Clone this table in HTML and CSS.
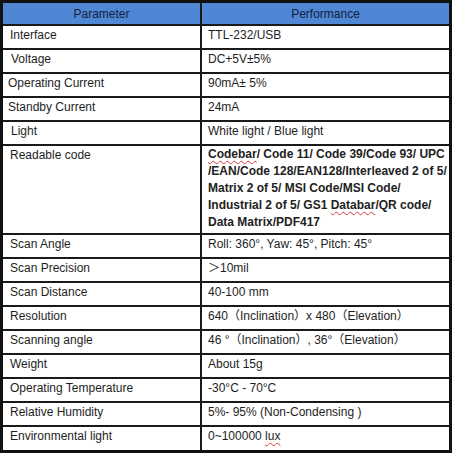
FILE: index.html
```html
<!DOCTYPE html>
<html lang="en">
<head>
<meta charset="utf-8">
<title>Specifications</title>
<link rel="stylesheet" href="styles.css">
</head>
<body>
<table class="spec">
  <colgroup><col class="col-param"><col class="col-perf"></colgroup>
  <thead>
    <tr class="head"><th>Parameter</th><th>Performance</th></tr>
  </thead>
  <tbody>
    <tr><td>Interface</td><td>TTL-232/USB</td></tr>
    <tr><td class="in-l">Voltage</td><td>DC+5V±5%</td></tr>
    <tr class="thick"><td class="in-s">Operating Current</td><td>90mA± 5%</td></tr>
    <tr class="thick"><td class="in-s">Standby Current</td><td>24mA</td></tr>
    <tr class="thick"><td class="in-l">Light</td><td>White light / Blue light</td></tr>
    <tr class="codes"><td>Readable code</td><td class="bold"><span class="spell">Codebar</span>/ Code 11/ Code 39/Code 93/ UPC<br>/EAN/Code 128/EAN128/Interleaved 2 of 5/<br>Matrix 2 of 5/ MSI Code/MSI Code/<br>Industrial 2 of 5/ GS1 <span class="spell">Databar</span>/QR code/<br>Data Matrix/PDF417</td></tr>
    <tr class="thick"><td>Scan Angle</td><td>Roll: 360°, Yaw: 45°, Pitch: 45°</td></tr>
    <tr class="thick"><td>Scan Precision</td><td>＞10mil</td></tr>
    <tr class="thick"><td>Scan Distance</td><td>40-100 mm</td></tr>
    <tr><td>Resolution</td><td>640（Inclination）x 480（Elevation）</td></tr>
    <tr class="thick"><td>Scanning angle</td><td>46 °（Inclination）, 36°（Elevation）</td></tr>
    <tr class="thick"><td>Weight</td><td>About 15g</td></tr>
    <tr><td>Operating Temperature</td><td>-30°C - 70°C</td></tr>
    <tr><td>Relative Humidity</td><td>5%- 95% (Non-Condensing )</td></tr>
    <tr class="last"><td>Environmental light</td><td>0~100000 <span class="spell">lux</span></td></tr>
  </tbody>
</table>
</body>
</html>
```

FILE: styles.css
```css
html, body {
  margin: 0;
  padding: 0;
  background: #ffffff;
}

.spec {
  width: 452px;
  border: 3px solid #111111;
  border-collapse: separate;
  border-spacing: 0;
  table-layout: fixed;
  font-family: "Liberation Sans", Arial, "Noto Sans CJK SC", sans-serif;
  font-size: 12px;
  color: #1e1e1e;
}

.col-param { width: 199px; }
.col-perf { width: 247px; }

.spec th,
.spec td {
  padding: 2px 0 0 6px;
  line-height: 14px;
  height: 20px;
  vertical-align: top;
  text-align: left;
  font-weight: normal;
  white-space: nowrap;
  border-bottom: 2px solid #1a1a1a;
}

.spec th:first-child,
.spec td:first-child {
  padding-left: 7px;
  border-right: 2px solid #1a1a1a;
}

.spec .head th {
  background: #4f87d5;
  color: #15213d;
  text-align: center;
  vertical-align: middle;
  padding: 0;
  height: 21px;
}

.spec .head th:first-child {
  padding: 0;
}

.spec td.in-s { padding-left: 5px; }
.spec td.in-l { padding-left: 8px; }

.spec .thick td { border-bottom-width: 2px; }

.spec .codes td {
  height: 85px;
}

.spec td.bold {
  font-weight: bold;
  line-height: 17px;
  padding-top: 0;
  color: #222222;
}

.spec .last td {
  border-bottom: 0;
  height: 21px;
}

.spell {
  text-decoration: underline wavy #d23a3a;
  text-decoration-thickness: 1px;
  text-underline-offset: 2px;
}
```
